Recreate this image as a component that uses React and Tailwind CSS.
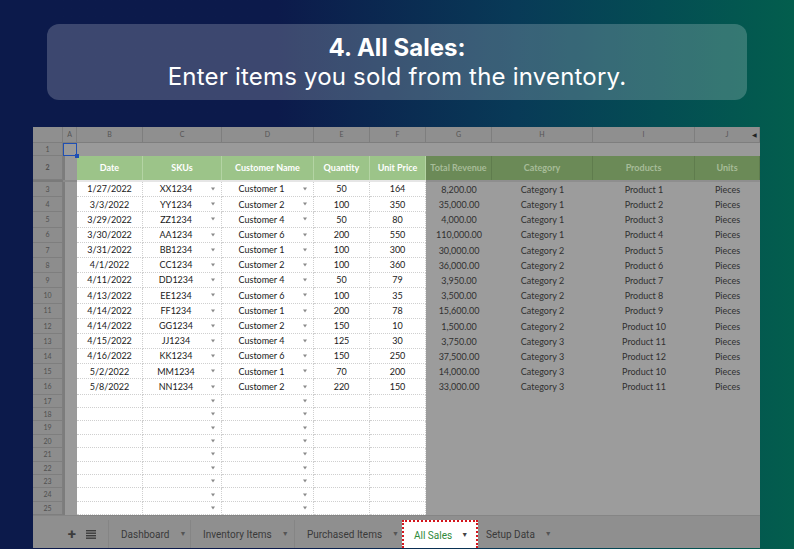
import React from "react";

const W = ["w-[30px]", "w-[14px]", "w-[66px]", "w-[79px]", "w-[92px]", "w-[56px]", "w-[56px]", "w-[66px]", "w-[101px]", "w-[102px]", "w-[65px]"];
const LETTERS = ["", "A", "B", "C", "D", "E", "F", "G", "H", "I", "J"];

const rows = [
  ["1/27/2022", "XX1234", "Customer 1", "50", "164", "8,200.00", "Category 1", "Product 1"],
  ["3/3/2022", "YY1234", "Customer 2", "100", "350", "35,000.00", "Category 1", "Product 2"],
  ["3/29/2022", "ZZ1234", "Customer 4", "50", "80", "4,000.00", "Category 1", "Product 3"],
  ["3/30/2022", "AA1234", "Customer 6", "200", "550", "110,000.00", "Category 1", "Product 4"],
  ["3/31/2022", "BB1234", "Customer 1", "100", "300", "30,000.00", "Category 2", "Product 5"],
  ["4/1/2022", "CC1234", "Customer 2", "100", "360", "36,000.00", "Category 2", "Product 6"],
  ["4/11/2022", "DD1234", "Customer 4", "50", "79", "3,950.00", "Category 2", "Product 7"],
  ["4/13/2022", "EE1234", "Customer 6", "100", "35", "3,500.00", "Category 2", "Product 8"],
  ["4/14/2022", "FF1234", "Customer 1", "200", "78", "15,600.00", "Category 2", "Product 9"],
  ["4/14/2022", "GG1234", "Customer 2", "150", "10", "1,500.00", "Category 2", "Product 10"],
  ["4/15/2022", "JJ1234", "Customer 4", "125", "30", "3,750.00", "Category 3", "Product 11"],
  ["4/16/2022", "KK1234", "Customer 6", "150", "250", "37,500.00", "Category 3", "Product 12"],
  ["5/2/2022", "MM1234", "Customer 1", "70", "200", "14,000.00", "Category 3", "Product 10"],
  ["5/8/2022", "NN1234", "Customer 2", "220", "150", "33,000.00", "Category 3", "Product 11"],
];

const Arrow = () => (
  <span className="absolute right-[6px] top-1/2 -translate-y-1/2 w-0 h-0 border-l-[2.5px] border-r-[2.5px] border-t-[3px] border-l-transparent border-r-transparent border-t-[#8a8a8a]" />
);

const RowHead = ({ n, h }) => (
  <div className={`${W[0]} ${h} shrink-0 bg-[#8d8d8d] border-b border-r border-[#7e7e7e] flex items-center justify-center text-[7px] text-[#505050]`}>
    {n}
  </div>
);

const ColA = ({ h }) => <div className={`${W[1]} ${h} shrink-0 bg-[#9a9a9a] border-l-[2px] border-[#7c7c7c]`} />;

const WhiteCell = ({ w, text, arrow }) => (
  <div className={`${w} relative shrink-0 h-full bg-white border-r border-b border-dotted border-[#cfcfcf] flex items-center justify-center ${arrow ? "pr-[12px]" : ""}`}>
    {text}
    {arrow && <Arrow />}
  </div>
);

const GrayCell = ({ w, text }) => (
  <div className={`${w} shrink-0 h-full bg-[#9c9c9c] flex items-center justify-center text-[#303030]`}>{text}</div>
);

function Tab({ label, w }) {
  return (
    <div className={`${w} shrink-0 whitespace-nowrap h-[28px] self-end flex items-center pl-[12px] gap-[10px] border-l border-[#858585] text-[10px] text-[#3a3a3a]`}>
      <span>{label}</span>
      <span className="text-[7px] text-[#555]">▼</span>
    </div>
  );
}

export default function App() {
  return (
    <div className="w-[794px] h-[549px] overflow-hidden flex flex-col items-center bg-linear-to-r from-[#0c1a4b] from-35% via-[#083a57] via-65% to-[#035e4d] font-['Inter',sans-serif]">
      <div className="mt-[24px] w-[700px] h-[76px] rounded-[12px] bg-white/20 flex flex-col items-center justify-center pt-[1px] text-white">
        <div className="text-[24px] font-bold leading-[28px]">4. All Sales:</div>
        <div className="text-[24px] leading-[29px] tracking-[0.2px]">Enter items you sold from the inventory.</div>
      </div>

      <div className="mt-[27px] w-[727px] self-start ml-[33px] flex flex-col bg-[#9a9a9a] font-['Lato',sans-serif] text-[9px] text-[#1a1a1a]">
        {/* column letters */}
        <div className="flex h-[16px] bg-[#8f8f8f] border-b border-[#7e7e7e]">
          {LETTERS.map((l, i) => (
            <div key={i} className={`${W[i]} relative shrink-0 h-full flex items-center justify-center text-[7px] text-[#555] border-r border-[#7e7e7e]`}>
              {l}
              {i === 10 && <span className="absolute right-[2px] text-[6px] text-[#222]">◀</span>}
            </div>
          ))}
        </div>

        {/* row 1 */}
        <div className="flex h-[13px]">
          <RowHead n="1" h="h-[13px]" />
          <div className={`${W[1]} h-[13px] relative shrink-0 border-[1.5px] border-[#1f4fb4]`}>
            <span className="absolute -right-[3px] -bottom-[3px] w-[4px] h-[4px] bg-[#1f4fb4]" />
          </div>
          <div className="flex-1 bg-[#9a9a9a]" />
        </div>

        {/* row 2 headers */}
        <div className="flex h-[24px] font-bold">
          <RowHead n="2" h="h-[24px]" />
          <ColA h="h-[24px]" />
          {["Date", "SKUs", "Customer Name", "Quantity", "Unit Price"].map((t, i) => (
            <div key={t} className={`${W[i + 2]} shrink-0 h-full bg-[#9cc489] border-r border-[#b4d4a4] flex items-center justify-center text-white`}>
              {t}
            </div>
          ))}
          {["Total Revenue", "Category", "Products", "Units"].map((t, i) => (
            <div key={t} className={`${W[i + 7]} shrink-0 h-full bg-[#6b8a57] border-r border-[#5f7c4d] flex items-center justify-center text-[#a7bc99]`}>
              {t}
            </div>
          ))}
        </div>
        <div className="flex h-[2px]">
          <div className="w-[30px] bg-[#7a7a7a]" />
          <div className="w-[14px] bg-[#8a8a8a]" />
          <div className="w-[349px] bg-[#e6e6e6]" />
          <div className="flex-1 bg-[#8e8e8e]" />
        </div>

        {rows.map((r, idx) => (
          <div key={idx} className="flex h-[15.2px]">
            <RowHead n={idx + 3} h="h-[15.2px]" />
            <ColA h="h-[15.2px]" />
            <WhiteCell w={W[2]} text={r[0]} />
            <WhiteCell w={W[3]} text={r[1]} arrow />
            <WhiteCell w={W[4]} text={r[2]} arrow />
            <WhiteCell w={W[5]} text={r[3]} />
            <WhiteCell w={W[6]} text={r[4]} />
            <GrayCell w={W[7]} text={r[5]} />
            <GrayCell w={W[8]} text={r[6]} />
            <GrayCell w={W[9]} text={r[7]} />
            <GrayCell w={W[10]} text="Pieces" />
          </div>
        ))}

        {Array.from({ length: 9 }, (_, k) => (
          <div key={k} className="flex h-[13.4px]">
            <RowHead n={k + 17} h="h-[13.4px]" />
            <ColA h="h-[13.4px]" />
            <WhiteCell w={W[2]} />
            <WhiteCell w={W[3]} arrow />
            <WhiteCell w={W[4]} arrow />
            <WhiteCell w={W[5]} />
            <WhiteCell w={W[6]} />
            <div className="flex-1 bg-[#9c9c9c]" />
          </div>
        ))}

        {/* sheet tabs */}
        <div className="flex h-[33px] bg-[#8f8f8f] border-t border-[#858585] font-['Roboto',sans-serif]">
          <div className="w-[75px] h-[28px] self-end shrink-0 flex items-center justify-end gap-[10px] pr-[12px] text-[#3c3c3c]">
            <span className="text-[15px] leading-none font-bold">+</span>
            <svg width="10" height="9" viewBox="0 0 10 9" className="fill-[#3c3c3c]">
              <rect x="0" y="0" width="10" height="1.4" />
              <rect x="0" y="2.5" width="10" height="1.4" />
              <rect x="0" y="5" width="10" height="1.4" />
              <rect x="0" y="7.5" width="10" height="1.4" />
            </svg>
          </div>
          <Tab label="Dashboard" w="w-[82px]" />
          <Tab label="Inventory Items" w="w-[104px]" />
          <Tab label="Purchased Items" w="w-[108px]" />
          <div className="w-[76px] shrink-0 whitespace-nowrap h-[28px] self-end bg-white border-[2.5px] border-b-0 border-dotted border-[#d4141c] flex items-center pl-[10px] gap-[9px] text-[10px] text-[#2f8a3a]">
            <span>All Sales</span>
            <span className="text-[7px] text-[#444]">▼</span>
          </div>
          <div className="w-[82px] shrink-0 whitespace-nowrap h-[28px] self-end flex items-center pl-[8px] gap-[10px] text-[10px] text-[#3a3a3a]">
            <span>Setup Data</span>
            <span className="text-[7px] text-[#555]">▼</span>
          </div>
          <div className="flex-1" />
        </div>
      </div>
    </div>
  );
}
